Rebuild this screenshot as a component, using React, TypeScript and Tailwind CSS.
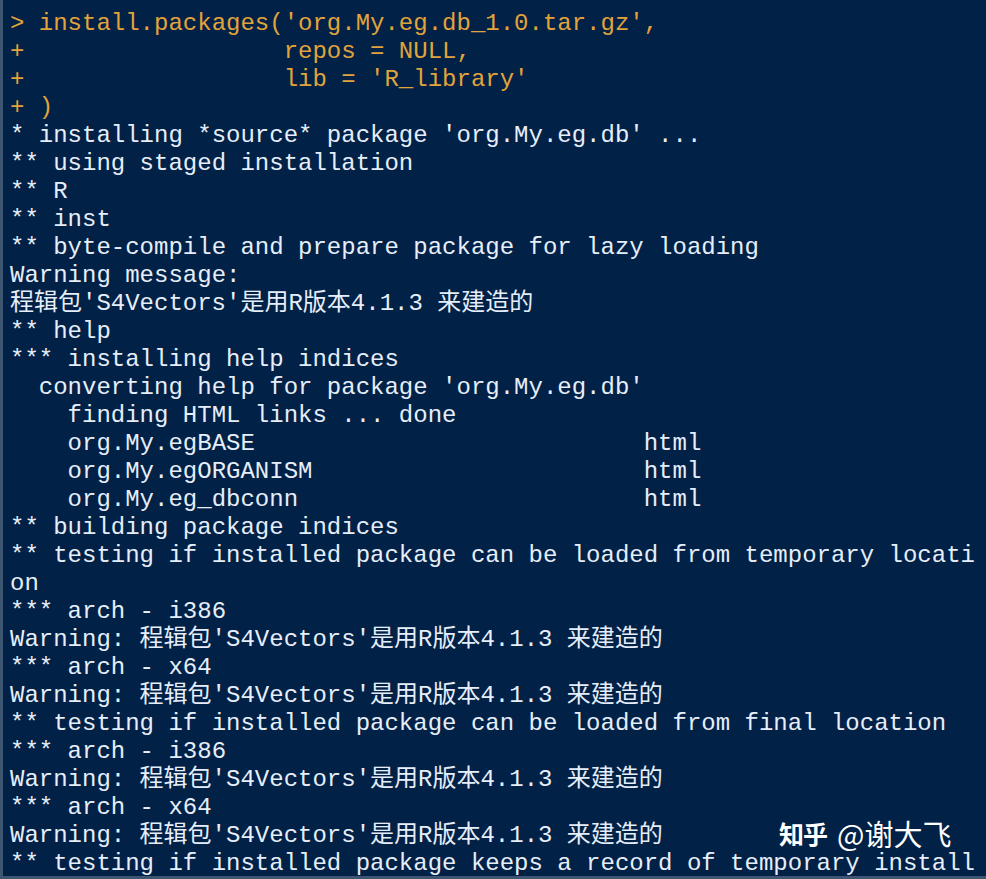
import React from "react";

type Line = { t: string; o?: boolean };

const W = "程辑包'S4Vectors'是用R版本4.1.3 来建造的";

const lines: Line[] = [
  { t: "> install.packages('org.My.eg.db_1.0.tar.gz',", o: true },
  { t: "+                  repos = NULL,", o: true },
  { t: "+                  lib = 'R_library'", o: true },
  { t: "+ )", o: true },
  { t: "* installing *source* package 'org.My.eg.db' ..." },
  { t: "** using staged installation" },
  { t: "** R" },
  { t: "** inst" },
  { t: "** byte-compile and prepare package for lazy loading" },
  { t: "Warning message:" },
  { t: W },
  { t: "** help" },
  { t: "*** installing help indices" },
  { t: "  converting help for package 'org.My.eg.db'" },
  { t: "    finding HTML links ... done" },
  { t: "    org.My.egBASE                           html" },
  { t: "    org.My.egORGANISM                       html" },
  { t: "    org.My.eg_dbconn                        html" },
  { t: "** building package indices" },
  { t: "** testing if installed package can be loaded from temporary locati" },
  { t: "on" },
  { t: "*** arch - i386" },
  { t: "Warning: " + W },
  { t: "*** arch - x64" },
  { t: "Warning: " + W },
  { t: "** testing if installed package can be loaded from final location" },
  { t: "*** arch - i386" },
  { t: "Warning: " + W },
  { t: "*** arch - x64" },
  { t: "Warning: " + W },
  { t: "** testing if installed package keeps a record of temporary install" },
];

export default function App() {
  return (
    <div className="relative h-[879px] w-[986px] overflow-hidden bg-[#022146] border-l-[3px] border-b-[3px] border-[#3d5671]">
      <div className="-mt-[18px] pl-[7px] font-['Liberation_Mono','Noto_Sans_CJK_SC',monospace] text-[24px] leading-[28px] text-[#e6eef9]">
        <div className="h-[28px] overflow-hidden whitespace-pre leading-[14px] text-[#e1a43c]">
          {"> setwd('D:/R/org.My.eg.db/')"}
        </div>
        {lines.map((l, i) => (
          <div
            key={i}
            className={
              "h-[28px] whitespace-pre " + (l.o ? "text-[#e1a43c]" : "")
            }
          >
            {l.t}
          </div>
        ))}
      </div>
      <div className="absolute left-[776px] top-[814px] flex items-center gap-[10px] font-['Noto_Sans_CJK_SC',sans-serif] text-white">
        <span className="text-[25px] font-bold leading-[38px] tracking-[-1px]">知乎</span>
        <span className="text-[29px] leading-[38px]">@谢大飞</span>
      </div>
    </div>
  );
}
